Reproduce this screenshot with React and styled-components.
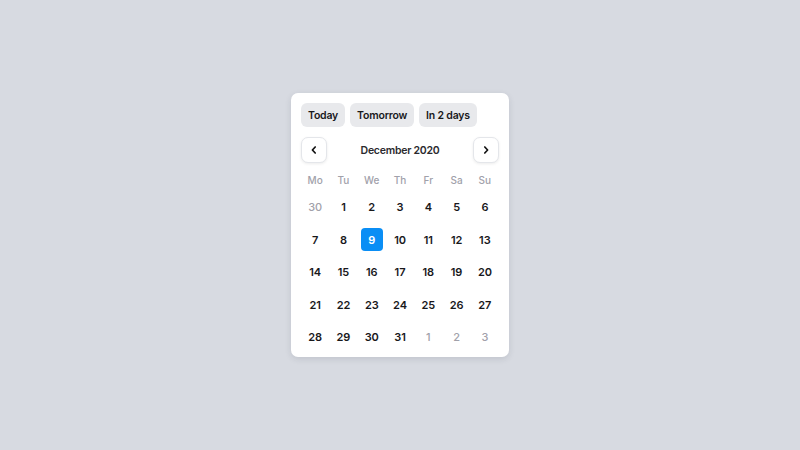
import styled, { createGlobalStyle } from "styled-components";

const GlobalStyle = createGlobalStyle`
  html, body {
    margin: 0;
    padding: 0;
    background: #d7dae1;
  }
  body {
    font-family: Inter, "Noto Sans", sans-serif;
    -webkit-font-smoothing: antialiased;
  }
`;

const Page = styled.div`
  width: 800px;
  height: 450px;
  display: flex;
  align-items: center;
  justify-content: center;
`;

const Card = styled.div`
  width: 198px;
  padding: 10px 10px 3.5px;
  background: #fff;
  border-radius: 7px;
  box-shadow: 0 2px 6px rgba(30, 40, 60, 0.12);
  display: flex;
  flex-direction: column;
`;

const Presets = styled.div`
  display: flex;
  gap: 5px;
`;

const Preset = styled.button`
  flex: none;
  height: 24px;
  padding: 0 7px;
  border: none;
  border-radius: 6px;
  background: #e8e9ec;
  color: #18181b;
  font-family: inherit;
  font-size: 10.5px;
  font-weight: 600;
  letter-spacing: -0.2px;
  white-space: nowrap;
  cursor: pointer;
`;

const Nav = styled.div`
  display: flex;
  align-items: center;
  justify-content: space-between;
  margin-top: 10px;
`;

const NavButton = styled.button`
  width: 26px;
  height: 26px;
  padding: 0;
  display: flex;
  align-items: center;
  justify-content: center;
  background: #fff;
  border: 1px solid #e4e6ea;
  border-radius: 7px;
  box-shadow: 0 1px 3px rgba(0, 0, 0, 0.08);
  color: #111;
  cursor: pointer;
`;

const Month = styled.div`
  font-size: 10.5px;
  font-weight: 600;
  letter-spacing: -0.25px;
  color: #2a2a2e;
`;

const Grid = styled.div`
  display: grid;
  grid-template-columns: repeat(7, 1fr);
  margin-top: 5px;
`;

const Weekday = styled.div`
  height: 23px;
  display: flex;
  align-items: center;
  justify-content: center;
  font-size: 10px;
  font-weight: 500;
  color: #a1a1aa;
`;

const Cell = styled.div`
  height: 32.5px;
  display: flex;
  align-items: center;
  justify-content: center;
`;

const Day = styled.div`
  width: 22px;
  height: 23px;
  display: flex;
  align-items: center;
  justify-content: center;
  border-radius: 4px;
  font-size: 11px;
  letter-spacing: -0.1px;
  color: ${(p) => (p.$selected ? "#fff" : p.$muted ? "#a1a1aa" : "#18181b")};
  background: ${(p) => (p.$selected ? "#0a8ef5" : "transparent")};
  font-weight: ${(p) => (p.$muted ? 500 : 600)};
`;

const Chevron = ({ dir }) => (
  <svg width="10" height="10" viewBox="0 0 10 10" fill="none">
    <path
      d={dir === "left" ? "M6.2 2 L3.4 5 L6.2 8" : "M3.8 2 L6.6 5 L3.8 8"}
      stroke="currentColor"
      strokeWidth="1.7"
      strokeLinecap="round"
      strokeLinejoin="round"
    />
  </svg>
);

const weekdays = ["Mo", "Tu", "We", "Th", "Fr", "Sa", "Su"];

const days = [
  { n: 30, muted: true },
  ...Array.from({ length: 31 }, (_, i) => ({ n: i + 1 })),
  { n: 1, muted: true },
  { n: 2, muted: true },
  { n: 3, muted: true },
];

export default function App() {
  return (
    <>
      <GlobalStyle />
      <Page>
        <Card>
          <Presets>
            <Preset>Today</Preset>
            <Preset>Tomorrow</Preset>
            <Preset>In 2 days</Preset>
          </Presets>
          <Nav>
            <NavButton aria-label="Previous month">
              <Chevron dir="left" />
            </NavButton>
            <Month>December 2020</Month>
            <NavButton aria-label="Next month">
              <Chevron dir="right" />
            </NavButton>
          </Nav>
          <Grid>
            {weekdays.map((w) => (
              <Weekday key={w}>{w}</Weekday>
            ))}
            {days.map((d, i) => (
              <Cell key={i}>
                <Day $muted={d.muted} $selected={!d.muted && d.n === 9}>
                  {d.n}
                </Day>
              </Cell>
            ))}
          </Grid>
        </Card>
      </Page>
    </>
  );
}
